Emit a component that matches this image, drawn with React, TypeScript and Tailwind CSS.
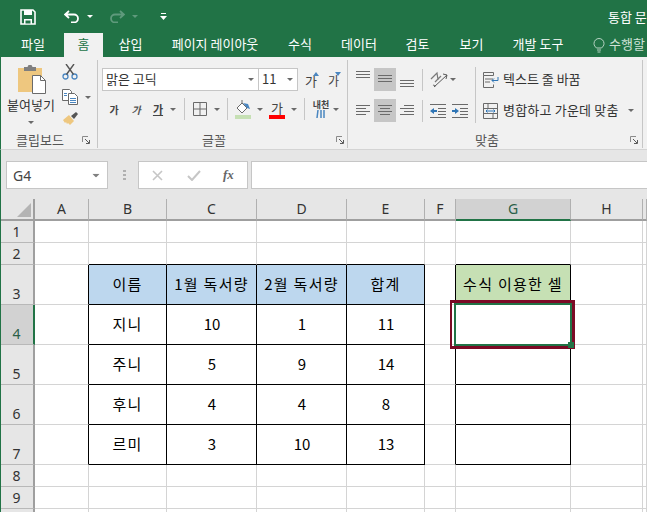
import React from "react";

const KR = "[font-family:'Noto_Sans_CJK_KR','Noto_Sans',sans-serif]";
const Caret = ({ className = "", color = "#6a6a6a" }: { className?: string; color?: string }) => (
  <svg width="6" height="3" viewBox="0 0 6 3" className={`shrink-0 ${className}`}><path d="M0 0h6L3 3z" fill={color} /></svg>
);
const Launcher = () => (
  <svg width="8" height="8" viewBox="0 0 8 8" className="shrink-0"><path d="M.5 6V.5H6" fill="none" stroke="#8a8a8a" /><path d="M3 3l4 4M7.500 4v3.500H4" fill="none" stroke="#5a5a5a" /></svg>
);
const VSep = ({ className = "" }: { className?: string }) => <div className={`w-px h-[22px] bg-[#c6c6c6] shrink-0 ${className}`} />;

const tabs: [string, number][] = [["파일", 62], ["홈", 39], ["삽입", 55], ["페이지 레이아웃", 114], ["수식", 56], ["데이터", 62], ["검토", 55], ["보기", 53], ["개발 도구", 80]];

type L = [number, number, number];
const AlignBtn = ({ active, lines }: { active?: boolean; lines: L[] }) => (
  <div className={`w-[22px] h-[23px] shrink-0 ${active ? "bg-[#c6c6c6]" : ""}`}>
    <svg width="22" height="23" viewBox="0 0 22 23">
      {lines.map(([x, y, w], i) => <path key={i} d={`M${x} ${y}.5h${w}`} stroke="#6a6a6a" />)}
    </svg>
  </div>
);

function ClipboardGroup() {
  return (
    <div className="w-[97px] shrink-0 border-r border-[#c6c6c6] flex flex-col h-[88px] mt-[3px]">
      <div className="flex h-[71px]">
        <div className="w-[54px] flex flex-col items-center pt-[5px] pl-[6px]">
          <svg width="30" height="29" viewBox="0 0 30 29" className="ml-[4px]">
            <path d="M0 3h24v24H0z" fill="#eec77f" />
            <path d="M6 2h3.500l1-2h3l1 2H18v4H6z" fill="#7f7f7f" />
            <path d="M14.500 10.500h8l5 5v13h-13z" fill="#fff" stroke="#6a6a6a" />
            <path d="M22.500 10.500v5h5" fill="none" stroke="#6a6a6a" />
          </svg>
          <span className={`${KR} text-[13px] leading-[16px] text-[#333] mt-[3px] whitespace-nowrap`}>붙여넣기</span>
          <Caret className="mt-[8px]" />
        </div>
        <div className="flex flex-col pl-[7px] pt-[4px]">
          <svg width="16" height="16" viewBox="0 0 16 16">
            <circle cx="3.500" cy="12.500" r="2.500" fill="none" stroke="#4a86c0" strokeWidth="1.300" />
            <circle cx="12.500" cy="12.500" r="2.500" fill="none" stroke="#4a86c0" strokeWidth="1.300" />
            <path d="M4.500 10.500L12 0M11.500 10.500L4 0" stroke="#555" strokeWidth="1.400" />
          </svg>
          <div className="flex items-center mt-[9px] h-[16px]">
            <svg width="16" height="16" viewBox="0 0 16 16" fill="#fff" stroke="#6a6a6a">
              <path d="M.5.5h7l2 2v9h-9z" />
              <path d="M6.500 4.500h6l3 3v8h-9z" />
              <path d="M8 9.500h6M8 11.500h6M8 13.500h6M2 4.500h3M2 6.500h3" stroke="#4a86c0" fill="none" />
            </svg>
            <Caret className="ml-[7px]" />
          </div>
          <svg width="17" height="15" viewBox="0 0 17 15" className="mt-[6px]">
            <path d="M1 9l6-5 5 6-4 4-2-2-1 1-1-2-1 1z" fill="#eec77f" />
            <path d="M9 5l5-4 2 2-4 5z" fill="#555" />
          </svg>
        </div>
      </div>
      <div className="flex items-center h-[17px] mt-[2px]">
        <span className={`${KR} text-[13px] leading-[17px] text-[#555] w-[84px] text-center -ml-[3px]`}>클립보드</span>
        <Launcher />
      </div>
    </div>
  );
}

function FontGroup() {
  return (
    <div className="w-[250px] shrink-0 border-r border-[#c6c6c6] flex flex-col h-[88px] mt-[3px] pl-[4px]">
      <div className="flex items-center mt-[8px] h-[23px]">
        <div className="w-[157px] h-[23px] bg-white border border-[#c6c6c6] flex items-center justify-between pl-[3px] pr-[4px]">
          <span className={`${KR} text-[13px] text-[#333] pb-[2px]`}>맑은 고딕</span>
          <Caret />
        </div>
        <div className="w-[39px] h-[23px] bg-white border border-[#c6c6c6] border-l-0 flex items-center justify-between pl-[3px] pr-[4px]">
          <span className={`${KR} text-[13px] text-[#333] pb-[2px]`}>11</span>
          <Caret />
        </div>
        <div className="relative ml-[7px] w-[20px] h-[23px] shrink-0">
          <span className={`${KR} text-[13px] text-[#444] leading-[23px] block mt-[1px]`}>가</span>
          <svg width="6" height="4" viewBox="0 0 6 4" className="absolute top-[4px] left-[8px]"><path d="M0 4L3 0l3 4z" fill="#4a86c0" /></svg>
        </div>
        <div className="relative ml-[3px] w-[18px] h-[23px] shrink-0">
          <span className={`${KR} text-[12px] text-[#444] leading-[23px] block mt-[1px]`}>가</span>
          <svg width="6" height="4" viewBox="0 0 6 4" className="absolute top-[4px] left-[7px]"><path d="M0 0h6L3 4z" fill="#4a86c0" /></svg>
        </div>
      </div>
      <div className="flex items-center h-[24px] mt-[6px]">
        <span className={`${KR} text-[10px] font-bold text-[#444] w-[22px] text-center ml-[1px]`}>가</span>
        <span className={`${KR} text-[10px] italic font-bold text-[#555] w-[22px] text-center`}>가</span>
        <span className={`${KR} text-[11px] font-bold text-[#444] underline w-[22px] text-center`}>가</span>
        <Caret className="ml-[1px]" />
        <VSep className="ml-[8px]" />
        <svg width="14" height="14" viewBox="0 0 14 14" className="ml-[8px] shrink-0"><path d="M.5.5h13v13H.5zM7 .5v13M.5 7h13" fill="none" stroke="#6a6a6a" /></svg>
        <Caret className="ml-[7px]" />
        <VSep className="ml-[7px]" />
        <svg width="16" height="19" viewBox="0 0 16 19" className="ml-[7px] shrink-0">
          <path d="M2 8l5-5 5 5-5 5z" fill="#fff" stroke="#6a6a6a" />
          <path d="M8 3l5 1 2 5-3-1z" fill="#4a86c0" />
          <path d="M7 0v3" stroke="#6a6a6a" />
          <rect y="15" width="16" height="4" fill="#c6e0b4" />
        </svg>
        <Caret className="ml-[6px]" />
        <div className="flex flex-col items-center ml-[6px] w-[16px] shrink-0">
          <span className={`${KR} text-[13px] leading-[15px] text-[#444]`}>가</span>
          <div className="w-[16px] h-[4px] bg-[#ff0000]" />
        </div>
        <Caret className="ml-[6px]" />
        <VSep className="ml-[7px]" />
        <div className="flex flex-col items-center ml-[7px] w-[18px] shrink-0">
          <span className={`${KR} text-[9px] leading-[10px] text-[#444] font-bold whitespace-nowrap`}>내천</span>
          <svg width="10" height="8" viewBox="0 0 10 8"><path d="M2 0l-1 8M5 0v8M8 0v8" stroke="#4a86c0" strokeWidth="1.500" /></svg>
        </div>
        <Caret className="ml-[3px]" />
      </div>
      <div className="flex items-center h-[17px] mt-[10px]">
        <span className={`${KR} text-[13px] leading-[17px] text-[#555] w-[234px] text-center -ml-[5px] mr-[5px]`}>글꼴</span>
        <Launcher />
      </div>
    </div>
  );
}

function AlignGroup() {
  return (
    <div className="w-[295px] shrink-0 border-r border-[#c6c6c6] flex flex-col h-[88px] mt-[3px] pl-[4px]">
      <div className="flex h-[64px] mt-[7px]">
        <div className="w-[123px] shrink-0 pt-[1px] flex flex-col gap-[8px]">
          <div className="flex h-[23px] items-center">
            <AlignBtn lines={[[4, 3, 14], [4, 6, 14], [4, 9, 14]]} />
            <AlignBtn active lines={[[4, 7, 14], [4, 10, 14], [4, 13, 14]]} />
            <AlignBtn lines={[[4, 12, 14], [4, 15, 14], [4, 18, 14]]} />
            <VSep className="ml-[4px]" />
            <svg width="18" height="17" viewBox="0 0 18 17" className="ml-[7px] shrink-0">
              <path d="M1 8l6-6 1 7M5 11l6-6M3 14l3 1" fill="none" stroke="#7a7a7a" strokeWidth="1.200" />
              <path d="M4 16L17 4M13 3l4 1-1 4" fill="none" stroke="#5a5a5a" />
            </svg>
            <Caret className="ml-[2px]" />
          </div>
          <div className="flex h-[23px] items-center">
            <AlignBtn lines={[[4, 6, 14], [4, 9, 10], [4, 12, 14], [4, 15, 10]]} />
            <AlignBtn active lines={[[4, 6, 14], [6, 9, 10], [4, 12, 14], [6, 15, 10]]} />
            <AlignBtn lines={[[8, 6, 10], [4, 9, 14], [8, 12, 10], [4, 15, 14]]} />
            <VSep className="ml-[4px]" />
            <svg width="16" height="14" viewBox="0 0 16 14" className="ml-[7px] shrink-0"><path d="M0 .5h16M0 13.500h16M8 4.500h8M8 7.500h8M8 10.500h8" stroke="#6a6a6a" /><path d="M0 7l4-3v2h3v2H4v2z" fill="#2f75b5" /></svg>
            <svg width="16" height="14" viewBox="0 0 16 14" className="ml-[6px] shrink-0"><path d="M0 .5h16M0 13.500h16M8 4.500h8M8 7.500h8M8 10.500h8" stroke="#6a6a6a" /><path d="M7 7L3 4v2H0v2h3v2z" fill="#2f75b5" /></svg>
          </div>
        </div>
        <div className="border-l border-[#c6c6c6] pl-[7px] flex flex-col gap-[8px] pt-[1px] h-[56px]">
          <div className="flex h-[23px] items-center">
            <svg width="16" height="16" viewBox="0 0 16 16" className="shrink-0"><path d="M.5.5h10v3H.5zM.5 3.500v12h10v-3" fill="none" stroke="#6a6a6a" /><path d="M2 7h8M2 10h5" stroke="#6a6a6a" /><path d="M15 5v3.500H9M11 6.500L9 8.500l2 2" fill="none" stroke="#2f75b5" /></svg>
            <span className={`${KR} text-[13px] text-[#333] ml-[4px] pb-[2px] whitespace-nowrap`}>텍스트 줄 바꿈</span>
          </div>
          <div className="flex h-[23px] items-center">
            <svg width="16" height="16" viewBox="0 0 16 16" className="shrink-0"><path d="M.5.5h14v15H.5zM.5 5.500h14M.5 10.500h14M5 .5v5M10 10.500v5" fill="none" stroke="#6a6a6a" /><path d="M3 8h9M4.500 6.500L3 8l1.500 1.500M10.500 6.500L12 8l-1.500 1.500" fill="none" stroke="#2f75b5" /></svg>
            <span className={`${KR} text-[13px] tracking-[0.2px] text-[#333] ml-[4px] pb-[2px] whitespace-nowrap`}>병합하고 가운데 맞춤</span>
            <Caret className="ml-[9px]" />
          </div>
        </div>
      </div>
      <div className="flex items-center h-[17px]">
        <span className={`${KR} text-[13px] leading-[17px] text-[#555] w-[270px] text-center mr-[8px]`}>맞춤</span>
        <Launcher />
      </div>
    </div>
  );
}

const rowsDef: { n: number; h: string }[] = [
  { n: 1, h: "h-[22px]" }, { n: 2, h: "h-[22px]" }, { n: 3, h: "h-[40px]" }, { n: 4, h: "h-[40px]" },
  { n: 5, h: "h-[40px]" }, { n: 6, h: "h-[40px]" }, { n: 7, h: "h-[40px]" }, { n: 8, h: "h-[22px]" }, { n: 9, h: "h-[22px]" }, { n: 10, h: "h-[4px]" },
];
const colsDef: [string, string][] = [["A", "w-[54px]"], ["B", "w-[78px]"], ["C", "w-[90px]"], ["D", "w-[90px]"], ["E", "w-[78px]"], ["F", "w-[31px]"], ["G", "w-[115px]"], ["H", "w-[72px]"], ["", "w-[4px]"]];

const table: Record<number, string[]> = {
  3: ["이름", "1월 독서량", "2월 독서량", "합계"],
  4: ["지니", "10", "1", "11"],
  5: ["주니", "5", "9", "14"],
  6: ["후니", "4", "4", "8"],
  7: ["르미", "3", "10", "13"],
};
const gText: Record<number, string> = { 3: "수식 이용한 셀" };

function Cell({ r, c }: { r: number; c: number }) {
  const inT = r >= 3 && r <= 7 && c >= 1 && c <= 4;
  const inG = r >= 3 && r <= 7 && c === 6;
  const rBlack = r >= 3 && r <= 7 && c >= 0 && c <= 6;
  const bBlack = r >= 2 && r <= 7 && ((c >= 1 && c <= 4) || c === 6);
  const text = inT ? table[r][c - 1] : inG ? gText[r] : "";
  const bg = r === 3 && inT ? "bg-[#bdd7ee]" : r === 3 && inG ? "bg-[#c6e0b4]" : "";
  const hangul = /[가-힣]/.test(text || "");
  return (
    <div className={`${colsDef[c][1]} shrink-0 h-full box-border border-r border-b flex items-center justify-center ${bg} ${rBlack ? "border-r-black" : "border-r-[#d4d4d4]"} ${bBlack ? "border-b-black" : "border-b-[#d4d4d4]"}`}>
      {text && <span className={`${KR} text-[15px] text-black whitespace-nowrap ${hangul ? "tracking-[1.3px]" : "pl-[1px]"}`}>{text}</span>}
    </div>
  );
}

export default function App() {
  return (
    <div className="w-[647px] h-[512px] overflow-hidden bg-white relative font-['Noto_Sans',sans-serif]">
      <div className="h-[33px] bg-[#217346] flex items-center relative">
        <svg width="16" height="16" viewBox="0 0 16 16" className="ml-[20px]">
          <path d="M1 1h12l2 2v12H1z" fill="none" stroke="#fff" strokeWidth="1.600" />
          <path d="M4 1h8v5H4zM4 10h8v5H4z" fill="#fff" />
          <path d="M5.500 11.500h5v3h-5z" fill="#217346" />
        </svg>
        <svg width="16" height="13" viewBox="0 0 16 13" className="ml-[28px]"><path d="M5 1L1 4.500 5 8M1.500 4.500H10a4 4 0 0 1 0 8H7" fill="none" stroke="#fff" strokeWidth="1.800" /></svg>
        <Caret className="ml-[7px]" color="#fff" />
        <svg width="16" height="13" viewBox="0 0 16 13" className="ml-[16px]"><path d="M11 1l4 3.500L11 8M14.500 4.500H6a4 4 0 0 0 0 8h3" fill="none" stroke="#5f9a7c" strokeWidth="1.800" /></svg>
        <Caret className="ml-[7px]" color="#5f9a7c" />
        <svg width="7" height="7" viewBox="0 0 7 7" className="ml-[22px]"><path d="M1 .5h5" stroke="#fff" /><path d="M0 3h7L3.500 7z" fill="#fff" /></svg>
        <span className={`${KR} text-[13px] text-white ml-auto w-[39px] overflow-hidden whitespace-nowrap`}>통합 문</span>
      </div>
      <div className="h-[24px] bg-[#217346] flex items-end pl-[2px]">
        {tabs.map(([t, w], i) => (
          <div key={t} style={{ width: w }} className={`h-[24px] pb-[2px] flex items-center justify-center whitespace-nowrap ${KR} text-[13px] ${i === 1 ? "bg-[#f1f1f1] text-[#217346]" : "text-white"}`}>{t}</div>
        ))}
        <svg width="12" height="15" viewBox="0 0 12 15" className="ml-[15px] mb-[4px]"><path d="M3.500 10C2 8.500 1 7.500 1 5.500a5 5 0 0 1 10 0c0 2-1 3-2.500 4.500zM4 12h4M4.500 14h3" fill="none" stroke="#b7d3c3" /></svg>
        <span className={`${KR} text-[13px] text-[#cfe2d7] ml-[4px] h-[24px] pb-[2px] flex items-center whitespace-nowrap`}>수행할</span>
      </div>
      <div className="h-[93px] bg-[#f1f1f1] border-l border-l-[#217346] border-b border-b-[#d4d4d4] flex">
        <ClipboardGroup />
        <FontGroup />
        <AlignGroup />
      </div>
      <div className="h-[49px] bg-[#e6e6e6] border-l border-l-[#217346] flex items-start pt-[11px]">
        <div className="ml-[5px] w-[102px] h-[28px] bg-white border border-[#c6c6c6] flex items-center justify-between pl-[6px] pr-[8px] shrink-0">
          <span className="text-[14px] text-[#444]">G4</span>
          <Caret color="#808080" className="scale-125" />
        </div>
        <div className="w-[3px] h-[10px] ml-[15px] mt-[9px] flex flex-col justify-between shrink-0">
          <div className="h-[2px] bg-[#b0b0b0]" /><div className="h-[2px] bg-[#b0b0b0]" /><div className="h-[2px] bg-[#b0b0b0]" />
        </div>
        <div className="ml-[12px] w-[110px] h-[28px] bg-white border border-[#c6c6c6] flex items-center shrink-0">
          <svg width="11" height="11" viewBox="0 0 11 11" className="ml-[13px]"><path d="M1 1l9 9M10 1l-9 9" stroke="#c6c6c6" strokeWidth="1.600" /></svg>
          <svg width="14" height="11" viewBox="0 0 14 11" className="ml-[24px]"><path d="M1 6l4 4 8-9" fill="none" stroke="#c6c6c6" strokeWidth="2" /></svg>
          <span className="ml-[22px] text-[13px] italic font-bold text-[#666] font-['Liberation_Serif',serif]">fx</span>
        </div>
        <div className="ml-[3px] flex-1 h-[28px] bg-white border border-[#c6c6c6] border-r-0" />
      </div>
      <div className="relative border-l border-l-[#217346]">
        <div className="flex h-[22px] bg-[#e6e6e6]">
          <div className="w-[34px] shrink-0 h-full border-r-2 border-b-2 border-[#9f9f9f] relative box-border">
            <svg width="14" height="14" viewBox="0 0 14 14" className="absolute right-[2px] bottom-[2px]"><path d="M14 0v14H0z" fill="#b4b4b4" /></svg>
          </div>
          {colsDef.map(([c, w]) => (
            <div key={c} className={`${w} shrink-0 h-full box-border border-r pb-[2px] flex items-center justify-center text-[14px] ${c === "G" ? "bg-[#d2d2d2] border-b-2 border-b-[#217346] border-r-[#b0b0b0] text-[#2a5f48]" : "border-b-2 border-b-[#9f9f9f] border-r-[#b0b0b0] text-[#333]"}`}>{c}</div>
          ))}
        </div>
        {rowsDef.map(({ n, h }) => (
          <div key={n} className={`flex ${h}`}>
            <div className={`w-[34px] shrink-0 h-full box-border border-b border-b-[#b8b8b8] flex items-end justify-center text-[14px] leading-[20px] pr-[1px] ${n === 4 ? "bg-[#d2d2d2] border-r-2 border-r-[#217346] text-[#2a5f48]" : "bg-[#e6e6e6] border-r-2 border-r-[#9f9f9f] text-[#333]"}`}>{n < 10 ? n : ""}</div>
            {colsDef.map((_, c) => <Cell key={c} r={n} c={c} />)}
          </div>
        ))}
        <div className="absolute left-[449px] top-[101px] w-[125px] h-[49px] border-l-2 border-t-[3px] border-r-[3px] border-b-[3px] border-[#7b0a25] box-border" />
        <div className="absolute left-[453px] top-[104px] w-[118px] h-[43px] border-2 border-[#217346] box-border" />
        <div className="absolute left-[567px] top-[143px] w-[6px] h-[6px] bg-[#217346]" />
      </div>
    </div>
  );
}
